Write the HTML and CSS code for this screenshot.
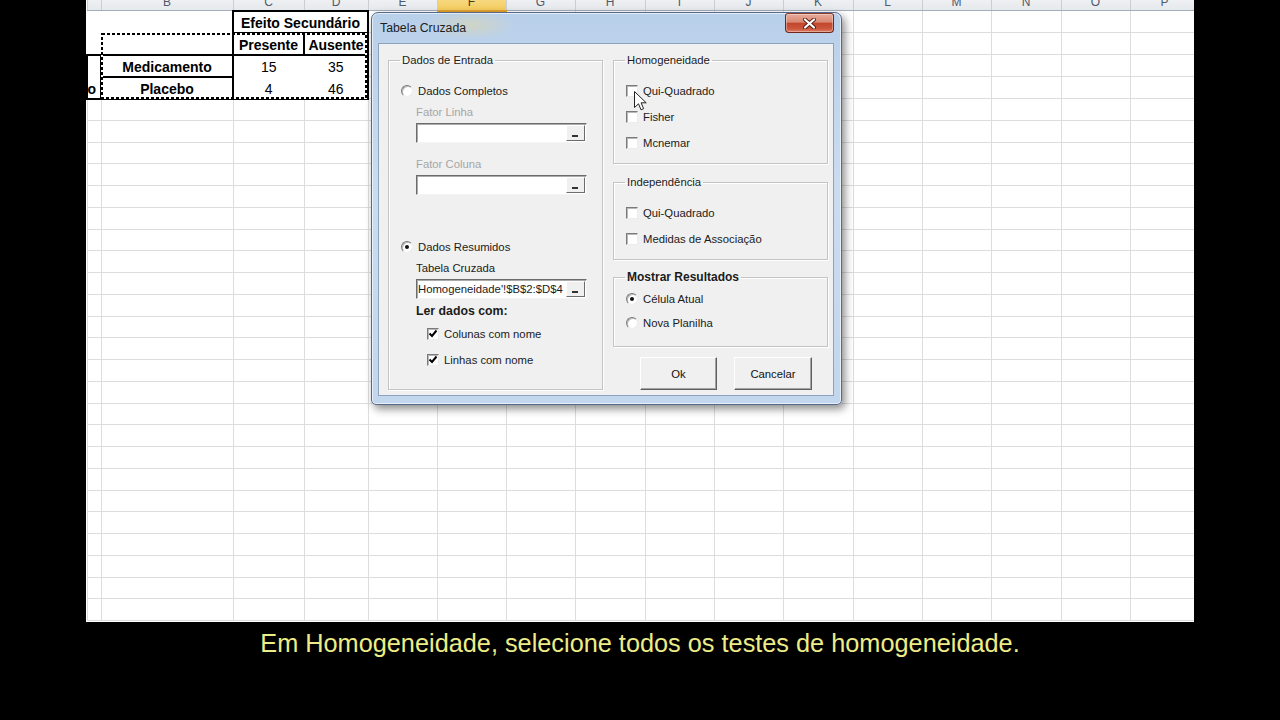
FILE: index.html
```html
<!DOCTYPE html>
<html lang="pt">

<head>
  <meta charset="UTF-8">
  <meta name="viewport" content="width=device-width, initial-scale=1.0">
  <title>Tabela Cruzada</title>
  <link rel="stylesheet" href="styles.css">
</head>

<body>
  <div class="screen">
    <div class="sheet">
      <table class="grid">
        <colgroup>
          <col class="col-a"><col class="col-b"><col class="col-c"><col class="col-d">
          <col class="col-n"><col class="col-n"><col class="col-n"><col class="col-w">
          <col class="col-n"><col class="col-n"><col class="col-w"><col class="col-n">
          <col class="col-n"><col class="col-w"><col class="col-n"><col class="col-n">
        </colgroup>
        <thead>
          <tr>
            <th></th><th>B</th><th>C</th><th>D</th><th>E</th><th class="sel">F</th><th>G</th><th>H</th>
            <th>I</th><th>J</th><th>K</th><th>L</th><th>M</th><th>N</th><th>O</th><th>P</th>
          </tr>
        </thead>
        <tbody>
          <tr class="top">
            <td class="blank"></td>
            <td class="blank"></td>
            <td colspan="2" class="b box">Efeito Secundário</td>
            <td></td><td></td><td></td><td></td><td></td><td></td><td></td><td></td><td></td><td></td><td></td><td></td>
          </tr>
          <tr class="top">
            <td class="blank"></td>
            <td class="blank under"></td>
            <td class="b box">Presente</td>
            <td class="b box">Ausente</td>
            <td></td><td></td><td></td><td></td><td></td><td></td><td></td><td></td><td></td><td></td><td></td><td></td>
          </tr>
          <tr class="top">
            <td rowspan="2" class="b box side"><div class="clip">Tratamento</div></td>
            <td class="b box">Medicamento</td>
            <td class="n-tl">15</td>
            <td class="n-tr">35</td>
            <td></td><td></td><td></td><td></td><td></td><td></td><td></td><td></td><td></td><td></td><td></td><td></td>
          </tr>
          <tr class="top">
            <td class="b box">Placebo</td>
            <td class="n-bl">4</td>
            <td class="n-br">46</td>
            <td></td><td></td><td></td><td></td><td></td><td></td><td></td><td></td><td></td><td></td><td></td><td></td>
          </tr>
        </tbody>
      </table>
      <svg class="ants" width="268" height="68" viewBox="0 0 268 68">
        <rect x="2" y="2" width="264" height="64" fill="none" stroke="#fff" stroke-width="2"/>
        <rect x="2" y="2" width="264" height="64" fill="none" stroke="#000" stroke-width="2" stroke-dasharray="3 2"/>
      </svg>
    </div>

    <p class="caption">Em Homogeneidade, selecione todos os testes de homogeneidade.</p>

    <div class="dialog">
      <div class="titlebar">
        <span class="title">Tabela Cruzada</span>
        <span class="close">
          <svg width="13" height="11" viewBox="0 0 13 11">
            <path d="M2 1.5 L11 9.5 M11 1.5 L2 9.5" stroke="#5b1b12" stroke-width="4" stroke-linecap="round"/>
            <path d="M2 1.5 L11 9.5 M11 1.5 L2 9.5" stroke="#fff" stroke-width="2.2" stroke-linecap="round"/>
          </svg>
        </span>
      </div>
      <div class="client">
        <fieldset class="group left">
          <legend>Dados de Entrada</legend>
          <div class="opt first"><span class="radio"></span>Dados Completos</div>
          <div class="lbl off">Fator Linha</div>
          <div class="field"><span class="val"></span><span class="pick"></span></div>
          <div class="lbl off gap-l">Fator Coluna</div>
          <div class="field"><span class="val"></span><span class="pick"></span></div>
          <div class="opt gap-r"><span class="radio on"></span>Dados Resumidos</div>
          <div class="lbl">Tabela Cruzada</div>
          <div class="field"><span class="val">Homogeneidade'!$B$2:$D$4</span><span class="pick"></span></div>
          <div class="lbl strong">Ler dados com:</div>
          <div class="opt sub c1"><span class="check on"><svg width="10" height="10" viewBox="0 0 10 10"><path d="M1.5 4.5 L4 7 L8.5 1.5" fill="none" stroke="#000" stroke-width="2"/></svg></span>Colunas com nome</div>
          <div class="opt sub c2"><span class="check on"><svg width="10" height="10" viewBox="0 0 10 10"><path d="M1.5 4.5 L4 7 L8.5 1.5" fill="none" stroke="#000" stroke-width="2"/></svg></span>Linhas com nome</div>
        </fieldset>

        <div class="right">
          <fieldset class="group homog">
            <legend>Homogeneidade</legend>
            <div class="opt first"><span class="check"></span>Qui-Quadrado</div>
            <div class="opt next"><span class="check"></span>Fisher</div>
            <div class="opt next"><span class="check"></span>Mcnemar</div>
          </fieldset>
          <fieldset class="group indep">
            <legend>Independência</legend>
            <div class="opt first"><span class="check"></span>Qui-Quadrado</div>
            <div class="opt next"><span class="check"></span>Medidas de Associação</div>
          </fieldset>
          <fieldset class="group result">
            <legend class="strong">Mostrar Resultados</legend>
            <div class="opt tight"><span class="radio on"></span>Célula Atual</div>
            <div class="opt tight"><span class="radio"></span>Nova Planilha</div>
          </fieldset>
          <div class="actions">
            <span class="btn">Ok</span>
            <span class="btn wide">Cancelar</span>
          </div>
        </div>
      </div>
    </div>

    <svg class="cursor" width="14" height="21" viewBox="0 0 14 21">
      <path d="M0.5 0.5 L0.5 16.5 L4.5 12.8 L7 18.8 L9.6 17.7 L7.1 11.8 L12.2 11.8 Z" fill="#fff" stroke="#222" stroke-width="1"/>
    </svg>
  </div>

  <script>
    (function () {
      let body = document.querySelector(".grid tbody");
      for (let r = 5; r <= 28; r++) {
        let tr = document.createElement("tr");
        for (let c = 0; c < 16; c++) {
          tr.appendChild(document.createElement("td"));
        }
        body.appendChild(tr);
      }
    })();
  </script>
</body>

</html>
```

FILE: styles.css
```css
* {
  box-sizing: border-box;
}

body {
  margin: 0;
  background: #000;
}

.screen {
  position: relative;
  width: 1280px;
  height: 720px;
  overflow: hidden;
  background: #000;
}

/* spreadsheet */

.sheet {
  position: relative;
  margin-left: 86px;
  width: 1108px;
  height: 622px;
  overflow: hidden;
  background: #fff;
}

.grid {
  table-layout: fixed;
  border-collapse: collapse;
  width: 1112px;
  margin-top: -11px;
  font-family: "Liberation Sans", Arial, sans-serif;
  font-size: 14px;
  color: #000;
}

.col-a { width: 14px; }
.col-b { width: 132px; }
.col-c { width: 71px; }
.col-d { width: 64px; }
.col-n { width: 69px; }
.col-w { width: 70px; }

.grid th {
  height: 21px;
  padding: 0 0 1px;
  vertical-align: bottom;
  line-height: 14px;
  font-weight: normal;
  font-size: 12px;
  color: #4f5b6b;
  background: linear-gradient(#f6f7f9, #e5e8ec);
  border: 1px solid #c9ced5;
  border-bottom-color: #a3adba;
}

.grid th.sel {
  background: linear-gradient(#fae3a0, #f3cb5c);
  border-bottom: 2px solid #e3a12d;
  color: #43391d;
}

.grid td {
  height: 21.75px;
  padding: 0 2px 1px;
  border: 1px solid #dcdddf;
  vertical-align: bottom;
  line-height: 16px;
  text-align: center;
  white-space: nowrap;
  overflow: hidden;
}

.grid tr.top td {
  height: 22px;
}

.grid td.b {
  font-weight: bold;
}

.grid td.blank {
  border-color: #fff;
}

.grid td.under {
  border-bottom: 2px solid #000;
}

.grid td.box {
  border: 2px solid #000;
}

.grid td.side {
  padding: 0 4px 1px 0;
}

.clip {
  display: flex;
  justify-content: flex-end;
  overflow: hidden;
}

.grid td.n-tl { border-color: #000 #fff #fff #000; border-width: 2px 1px 1px 2px; }
.grid td.n-tr { border-color: #000 #000 #fff #fff; border-width: 2px 2px 1px 1px; }
.grid td.n-bl { border-color: #fff #fff #000 #000; border-width: 1px 1px 2px 2px; }
.grid td.n-br { border-color: #fff #000 #000 #fff; border-width: 1px 2px 2px 1px; }

.ants {
  position: absolute;
  left: 14px;
  top: 32px;
}

/* subtitle */

.caption {
  margin: 0;
  padding-top: 6px;
  text-align: center;
  font-family: "Liberation Sans", Arial, sans-serif;
  font-size: 25.3px;
  line-height: 30px;
  color: #eded88;
}

/* dialog */

.dialog {
  position: absolute;
  left: 371px;
  top: 12px;
  width: 471px;
  height: 393px;
  display: flex;
  flex-direction: column;
  padding: 0 7px 8px 6px;
  border: 1px solid #56698a;
  border-radius: 7px 7px 5px 5px;
  background: linear-gradient(#b9d0ea, #cadcf0 45%, #c2d6ed);
  box-shadow: inset 0 0 0 1px rgba(255, 255, 255, 0.6), 3px 4px 9px rgba(0, 0, 0, 0.45);
  font-family: "Liberation Sans", Arial, sans-serif;
  font-size: 11.3px;
  color: #1b1b1b;
}

.titlebar {
  position: relative;
  height: 30px;
  display: flex;
  justify-content: space-between;
  align-items: flex-start;
  background: radial-gradient(ellipse 45px 14px at 92px 12px, rgba(222, 214, 170, 0.6), transparent);
}

.title {
  margin: 8px 0 0 2px;
  font-size: 12.3px;
  line-height: 14px;
  color: #1e1e1e;
}

.close {
  width: 49px;
  height: 20px;
  display: flex;
  align-items: center;
  justify-content: center;
  border: 1px solid #6f271c;
  border-top-color: #8a3a2e;
  border-radius: 3px 3px 4px 4px;
  background: linear-gradient(#e7ab9b, #d98873 45%, #c2462d 52%, #cb553b 80%, #dc7d62);
  box-shadow: inset 0 0 0 1px rgba(255, 255, 255, 0.35);
}

.client {
  flex: 1;
  display: flex;
  gap: 10px;
  padding: 9px 5px 0 9px;
  border: 1px solid #8fa2bc;
  background: #f0f0f0;
}

.group {
  margin: 0;
  padding: 0 0 0 12px;
  min-width: 0;
  border: 1px solid #c4c4c4;
  box-shadow: 1px 1px 0 #fff, inset 1px 1px 0 #fff;
}

.group legend {
  margin-left: -1px;
  padding: 0 2px;
  line-height: 14px;
}

.group legend.strong {
  font-weight: bold;
  font-size: 12px;
}

.left {
  width: 215px;
  height: 337px;
}

.right {
  width: 215px;
  display: flex;
  flex-direction: column;
}

.homog {
  height: 111px;
}

.indep {
  margin-top: 11px;
  height: 85px;
}

.result {
  margin-top: 10px;
  height: 77px;
}

.opt {
  display: flex;
  align-items: center;
  gap: 5px;
  height: 18px;
}

.opt.first { margin-top: 15px; }
.opt.next { margin-top: 8px; }
.opt.tight { margin-top: 6px; }
.opt.gap-r { margin-top: 43px; }
.opt.sub { margin-left: 26px; }
.opt.c1 { margin-top: 7px; }
.opt.c2 { margin-top: 8px; }

.lbl {
  margin: 5px 0 0 15px;
  line-height: 14px;
}

.lbl.off {
  color: #a6a6a6;
}

.lbl.gap-l {
  margin-top: 14px;
}

.lbl.strong {
  font-weight: bold;
  font-size: 12.3px;
}

.field {
  display: flex;
  width: 171px;
  height: 20px;
  margin: 4px 0 0 15px;
  padding: 1px;
  background: #fff;
  border: 1px solid;
  border-color: #6c6c6c #f4f4f4 #f4f4f4 #6c6c6c;
  box-shadow: inset 1px 1px 0 #ababab;
}

.field .val {
  flex: 1;
  line-height: 16px;
  overflow: hidden;
  white-space: nowrap;
}

.field .pick {
  position: relative;
  width: 19px;
  background: #f0f0f0;
  border: 1px solid;
  border-color: #fff #6c6c6c #6c6c6c #fff;
}

.field .pick::after {
  content: "";
  position: absolute;
  left: 5px;
  bottom: 3px;
  width: 6px;
  height: 2px;
  background: #333;
}

.check,
.radio {
  position: relative;
  flex: none;
  width: 12px;
  height: 12px;
  background: #fff;
  border: 1px solid;
  border-color: #7a7a7a #ececec #ececec #7a7a7a;
  box-shadow: inset 1px 1px 0 #b8b8b8;
}

.check svg {
  position: absolute;
  left: 0;
  top: 0;
}

.radio {
  border-radius: 50%;
}

.radio.on::after {
  content: "";
  position: absolute;
  left: 3px;
  top: 3px;
  width: 4px;
  height: 4px;
  border-radius: 50%;
  background: #111;
}

.actions {
  display: flex;
  gap: 17px;
  margin-top: 10px;
  padding-left: 27px;
}

.btn {
  width: 77px;
  height: 33px;
  display: flex;
  align-items: center;
  justify-content: center;
  background: #f0f0f0;
  border: 1px solid;
  border-color: #fff #5f5f5f #5f5f5f #fff;
  box-shadow: inset -1px -1px 0 #a3a3a3;
  color: #111;
}

.btn.wide {
  width: 78px;
}

.cursor {
  position: absolute;
  left: 634px;
  top: 91px;
}
```
